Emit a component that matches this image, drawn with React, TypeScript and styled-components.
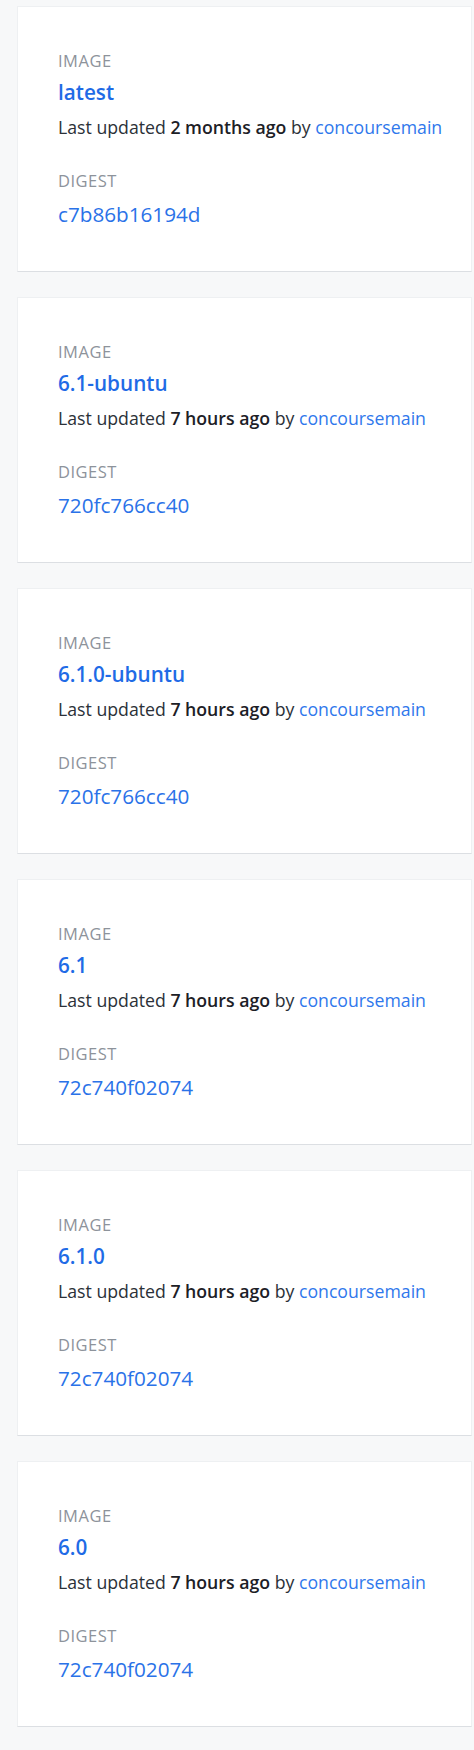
import React from "react";
import styled, { createGlobalStyle } from "styled-components";

const GlobalStyle = createGlobalStyle`
  html, body {
    margin: 0;
    padding: 0;
    background-color: #f7f8f9;
    font-family: "Open Sans", "Liberation Sans", sans-serif;
  }
`;

interface iTag {
  name: string;
  when: string;
  digest: string;
}

const tags: iTag[] = [
  { name: "latest", when: "2 months ago", digest: "c7b86b16194d" },
  { name: "6.1-ubuntu", when: "7 hours ago", digest: "720fc766cc40" },
  { name: "6.1.0-ubuntu", when: "7 hours ago", digest: "720fc766cc40" },
  { name: "6.1", when: "7 hours ago", digest: "72c740f02074" },
  { name: "6.1.0", when: "7 hours ago", digest: "72c740f02074" },
  { name: "6.0", when: "7 hours ago", digest: "72c740f02074" },
];

const TagCard: React.FC<iTag> = ({ name, when, digest }) => {
  return (
    <Card>
      <Label>IMAGE</Label>
      <TagName>{name}</TagName>
      <Meta>
        Last updated <Strong>{when}</Strong> by <User>concoursemain</User>
      </Meta>
      <Label gap={30}>DIGEST</Label>
      <Digest>{digest}</Digest>
    </Card>
  );
};

const App: React.FC = () => {
  return (
    <Page>
      <GlobalStyle />
      {tags.map((t) => (
        <TagCard key={t.name} {...t} />
      ))}
    </Page>
  );
};

export default App;

const Page = styled.div`
  min-height: 1750px;
  box-sizing: border-box;
  padding: 6px 2px 0 17px;
  display: flex;
  flex-direction: column;
  gap: 25px;
`;
const Card = styled.div`
  box-sizing: border-box;
  height: 266px;
  background-color: #ffffff;
  border: 1px solid #eef0f2;
  border-bottom-color: #dcdfe3;
  padding: 42px 20px 0 40px;
  display: flex;
  flex-direction: column;
`;
const Label = styled.div<{ gap?: number }>`
  font-size: 16.5px;
  line-height: 24px;
  letter-spacing: 0.5px;
  color: #8d939b;
  margin-top: ${({ gap }) => gap || 0}px;
`;
const TagName = styled.div`
  font-size: 20.7px;
  line-height: 28px;
  font-weight: 600;
  color: #1f6be6;
  margin-top: 5px;
`;
const Meta = styled.div`
  font-size: 17.7px;
  line-height: 24px;
  color: #2b3138;
  margin-top: 9px;
  white-space: nowrap;
`;
const Strong = styled.span`
  font-weight: 600;
  color: #1c2026;
`;
const User = styled.span`
  color: #2f78ec;
`;
const Digest = styled.div`
  font-size: 20.7px;
  line-height: 28px;
  color: #2a72e8;
  margin-top: 7px;
`;
